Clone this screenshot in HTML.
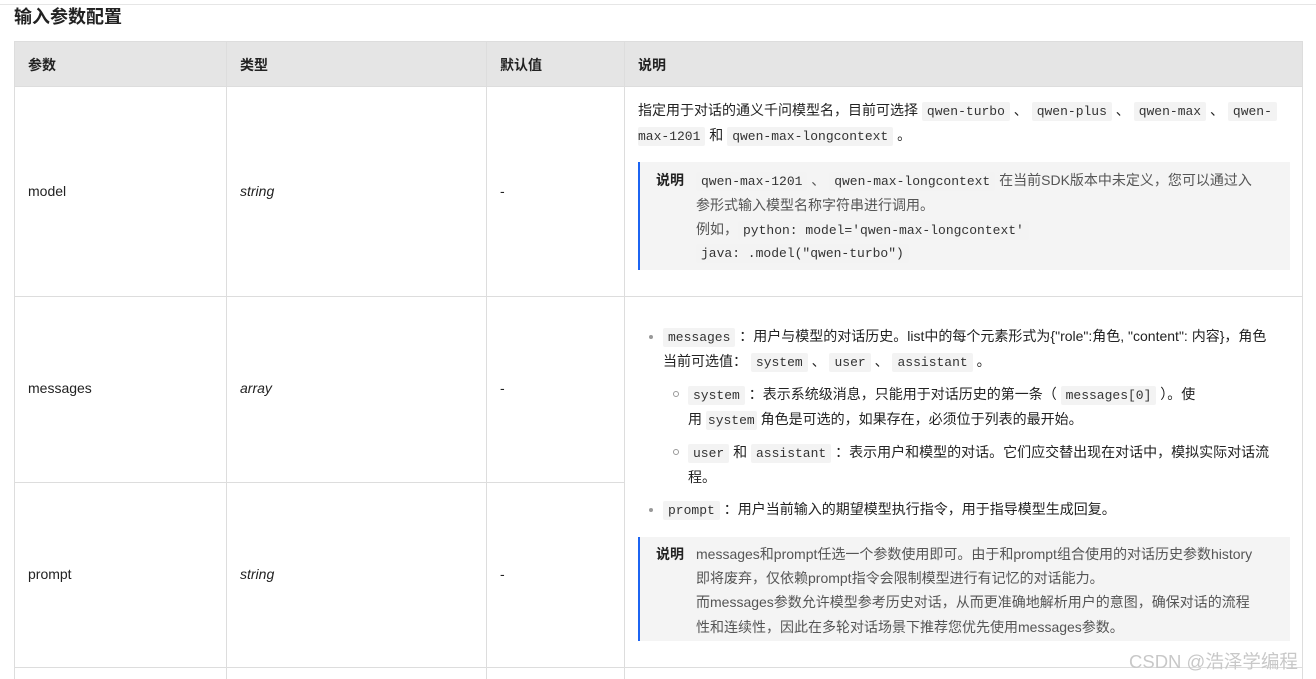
<!DOCTYPE html>
<html><head><meta charset="utf-8"><style>
*{margin:0;padding:0;box-sizing:border-box}
body{width:1316px;height:679px;overflow:hidden;background:#fff;position:relative;font-family:"Liberation Sans","Noto Sans CJK SC",sans-serif;font-size:14px;color:#222}
.a{position:absolute;white-space:nowrap}
.h{position:absolute;background:#ddd}
code{font-family:"Liberation Mono","Noto Sans CJK SC",monospace;font-size:13px;background:#f3f3f3;padding:2px 5px;border-radius:2px;color:#333}
.note{position:absolute;background:#f4f4f4;border-left:2px solid #1c64f2}
.n{color:#555}
.b{font-weight:bold}
.dot{position:absolute;width:4px;height:4px;border-radius:50%;background:#999}
.cir{position:absolute;width:6px;height:6px;border-radius:50%;border:1px solid #999}
</style></head><body>
<div class="h" style="left:0;top:4px;width:1316px;height:1px;background:#e6e6e6"></div>
<div class="a b" style="left:14px;top:3px;font-size:18px;color:#222">输入参数配置</div>
<div style="position:absolute;left:14px;top:41px;width:1289px;height:46px;background:#e5e5e5"></div>
<div class="h" style="left:14px;top:41px;width:1289px;height:1px"></div>
<div class="h" style="left:14px;top:86px;width:1289px;height:1px"></div>
<div class="h" style="left:14px;top:296px;width:1289px;height:1px"></div>
<div class="h" style="left:14px;top:482px;width:610px;height:1px"></div>
<div class="h" style="left:14px;top:667px;width:1289px;height:1px"></div>
<div class="h" style="left:14px;top:41px;width:1px;height:638px"></div>
<div class="h" style="left:226px;top:41px;width:1px;height:638px"></div>
<div class="h" style="left:486px;top:41px;width:1px;height:638px"></div>
<div class="h" style="left:624px;top:41px;width:1px;height:638px"></div>
<div class="h" style="left:1302px;top:41px;width:1px;height:638px"></div>
<div class="a b" style="left:28px;top:55px">参数</div>
<div class="a b" style="left:240px;top:55px">类型</div>
<div class="a b" style="left:500px;top:55px">默认值</div>
<div class="a b" style="left:638px;top:55px">说明</div>

<div class="a" style="left:28px;top:183px">model</div>
<div class="a" style="left:240px;top:183px;font-style:italic">string</div>
<div class="a" style="left:500px;top:183px">-</div>
<div class="a" style="left:28px;top:380px">messages</div>
<div class="a" style="left:240px;top:380px;font-style:italic">array</div>
<div class="a" style="left:500px;top:380px">-</div>
<div class="a" style="left:28px;top:566px">prompt</div>
<div class="a" style="left:240px;top:566px;font-style:italic">string</div>
<div class="a" style="left:500px;top:566px">-</div>

<div class="a" style="left:638px;top:100px">指定用于对话的通义千问模型名，目前可选择 <code>qwen-turbo</code> 、 <code>qwen-plus</code> 、 <code>qwen-max</code> 、 <code>qwen-</code></div>
<div class="a" style="left:638px;top:125px"><code style="padding-left:0">max-1201</code> 和 <code>qwen-max-longcontext</code> 。</div>
<div class="note" style="left:638px;top:162px;width:652px;height:108px"></div>
<div class="a b" style="left:656px;top:170px">说明</div>
<div class="a n" style="left:696px;top:170px"><code>qwen-max-1201</code> 、 <code>qwen-max-longcontext</code> 在当前SDK版本中未定义，您可以通过入</div>
<div class="a n" style="left:696px;top:195px">参形式输入模型名称字符串进行调用。</div>
<div class="a n" style="left:696px;top:219px">例如，<code>python: model='qwen-max-longcontext'</code></div>
<div class="a n" style="left:696px;top:244px"><code>java: .model("qwen-turbo")</code></div>

<div class="dot" style="left:649px;top:335px"></div>
<div class="a" style="left:663px;top:326px"><code>messages</code> ：用户与模型的对话历史。list中的每个元素形式为{"role":角色, "content": 内容}，角色</div>
<div class="a" style="left:663px;top:351px">当前可选值： <code>system</code> 、 <code>user</code> 、 <code>assistant</code> 。</div>
<div class="cir" style="left:673px;top:391px"></div>
<div class="a" style="left:688px;top:384px"><code>system</code> ：表示系统级消息，只能用于对话历史的第一条（ <code>messages[0]</code> ）。使</div>
<div class="a" style="left:688px;top:409px">用 <code style="padding:2px 2px">system</code> 角色是可选的，如果存在，必须位于列表的最开始。</div>
<div class="cir" style="left:673px;top:449px"></div>
<div class="a" style="left:688px;top:442px"><code>user</code> 和 <code>assistant</code> ：表示用户和模型的对话。它们应交替出现在对话中，模拟实际对话流</div>
<div class="a" style="left:688px;top:467px">程。</div>
<div class="dot" style="left:649px;top:508px"></div>
<div class="a" style="left:663px;top:499px"><code>prompt</code> ：用户当前输入的期望模型执行指令，用于指导模型生成回复。</div>

<div class="note" style="left:638px;top:537px;width:652px;height:104px"></div>
<div class="a b" style="left:656px;top:544px">说明</div>
<div class="a n" style="left:696px;top:544px">messages和prompt任选一个参数使用即可。由于和prompt组合使用的对话历史参数history</div>
<div class="a n" style="left:696px;top:568px">即将废弃，仅依赖prompt指令会限制模型进行有记忆的对话能力。</div>
<div class="a n" style="left:696px;top:592px">而messages参数允许模型参考历史对话，从而更准确地解析用户的意图，确保对话的流程</div>
<div class="a n" style="left:696px;top:617px">性和连续性，因此在多轮对话场景下推荐您优先使用messages参数。</div>

<div class="a" style="left:1129px;top:648px;font-size:18.5px;color:#c8c8c8">CSDN @浩泽学编程</div>
</body></html>
